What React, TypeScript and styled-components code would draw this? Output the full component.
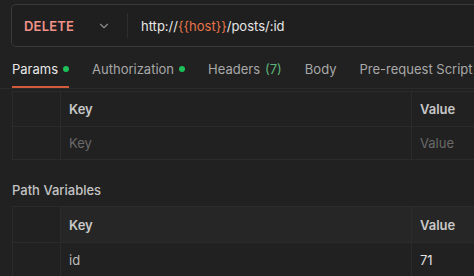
import { createGlobalStyle } from "styled-components";
import styled from "styled-components";
import { ChevronDown } from "lucide-react";

const GlobalStyle = createGlobalStyle`
	html, body {
		margin: 0;
		background: #212121;
	}
	body {
		font-family: Inter, "Open Sans", sans-serif;
		-webkit-font-smoothing: antialiased;
	}
`;

const StyledPage = styled.div`
	width: 474px;
	height: 276px;
	overflow: hidden;
	background: #212121;
	padding: 4px 0 0 11px;
	box-sizing: border-box;
`;

const StyledUrlBar = styled.div`
	display: flex;
	align-items: center;
	width: 520px;
	height: 43px;
	border: 1px solid #3a3a3a;
	border-radius: 5px;
	box-sizing: border-box;
	background: #1f1f1f;
`;

const StyledMethod = styled.div`
	display: flex;
	align-items: center;
	justify-content: space-between;
	width: 116px;
	padding: 0 16px 0 12px;
	box-sizing: border-box;
	border-right: 1px solid #2e2e2e;
	height: 25px;
	font-size: 13px;
	font-weight: 600;
	letter-spacing: 0.2px;
	color: #f0938a;
	svg {
		color: #8c8c8c;
	}
`;

const StyledUrl = styled.div`
	padding-left: 13px;
	font-size: 13px;
	color: #e6e6e6;
`;

const StyledVar = styled.span`
	color: #e8744a;
`;

const StyledTabs = styled.div`
	display: flex;
	align-items: flex-end;
	gap: 23px;
	width: 520px;
	height: 42px;
	border-bottom: 1px solid #2b2b2b;
	margin-left: -11px;
	padding-left: 12px;
	box-sizing: border-box;
`;

const StyledTab = styled.div<{ $active?: boolean }>`
	display: flex;
	align-items: center;
	gap: 5px;
	height: 32px;
	padding-bottom: 4px;
	box-sizing: border-box;
	font-size: 13px;
	white-space: nowrap;
	color: ${(p) => (p.$active ? "#e8e8e8" : "#a8a8a8")};
	border-bottom: 2px solid
		${(p) => (p.$active ? "#d2593a" : "transparent")};
`;

const StyledDot = styled.span`
	width: 6px;
	height: 6px;
	border-radius: 50%;
	background: #1ec05a;
`;

const StyledCount = styled.span`
	color: #5cb576;
`;

const StyledTable = styled.div<{ $top: number }>`
	display: grid;
	grid-template-columns: 48px 351px 120px;
	margin-top: ${(p) => p.$top}px;
	margin-left: 1px;
	border-top: 1px solid #2b2b2b;
	border-left: 1px solid #2b2b2b;
`;

const StyledCell = styled.div<{
	$head?: boolean;
	$shade?: boolean;
	$tone?: string;
	$h: number;
}>`
	display: flex;
	align-items: center;
	height: ${(p) => p.$h}px;
	padding-left: 8px;
	box-sizing: border-box;
	border-right: 1px solid #2b2b2b;
	border-bottom: 1px solid #2b2b2b;
	background: ${(p) => (p.$shade ? "#262626" : "transparent")};
	font-size: 13px;
	font-weight: ${(p) => (p.$head ? 600 : 400)};
	color: ${(p) => p.$tone ?? "#c8c8c8"};
`;

const StyledSection = styled.div`
	margin-top: 22px;
	font-size: 13px;
	font-weight: 500;
	color: #c4c4c4;
	padding-left: 1px;
`;

export default function App() {
	return (
		<StyledPage>
			<GlobalStyle />
			<StyledUrlBar>
				<StyledMethod>
					DELETE
					<ChevronDown size={14} strokeWidth={2} />
				</StyledMethod>
				<StyledUrl>
					http://<StyledVar>{"{{host}}"}</StyledVar>/posts/:id
				</StyledUrl>
			</StyledUrlBar>
			<StyledTabs>
				<StyledTab $active>
					Params <StyledDot />
				</StyledTab>
				<StyledTab>
					Authorization <StyledDot />
				</StyledTab>
				<StyledTab>
					Headers <StyledCount>(7)</StyledCount>
				</StyledTab>
				<StyledTab>Body</StyledTab>
				<StyledTab>Pre-request Script</StyledTab>
			</StyledTabs>
			<StyledTable $top={2}>
				<StyledCell $h={35} />
				<StyledCell $h={35} $head>
					Key
				</StyledCell>
				<StyledCell $h={35} $head>
					Value
				</StyledCell>
				<StyledCell $h={33} />
				<StyledCell $h={33} $tone="#6a6a6a">
					Key
				</StyledCell>
				<StyledCell $h={33} $tone="#6a6a6a">
					Value
				</StyledCell>
			</StyledTable>
			<StyledSection>Path Variables</StyledSection>
			<StyledTable $top={8}>
				<StyledCell $h={36} />
				<StyledCell $h={36} $head $shade>
					Key
				</StyledCell>
				<StyledCell $h={36} $head $shade>
					Value
				</StyledCell>
				<StyledCell $h={34} />
				<StyledCell $h={34} $tone="#bdbdbd">
					id
				</StyledCell>
				<StyledCell $h={34} $tone="#e2e2e2">
					71
				</StyledCell>
			</StyledTable>
		</StyledPage>
	);
}
